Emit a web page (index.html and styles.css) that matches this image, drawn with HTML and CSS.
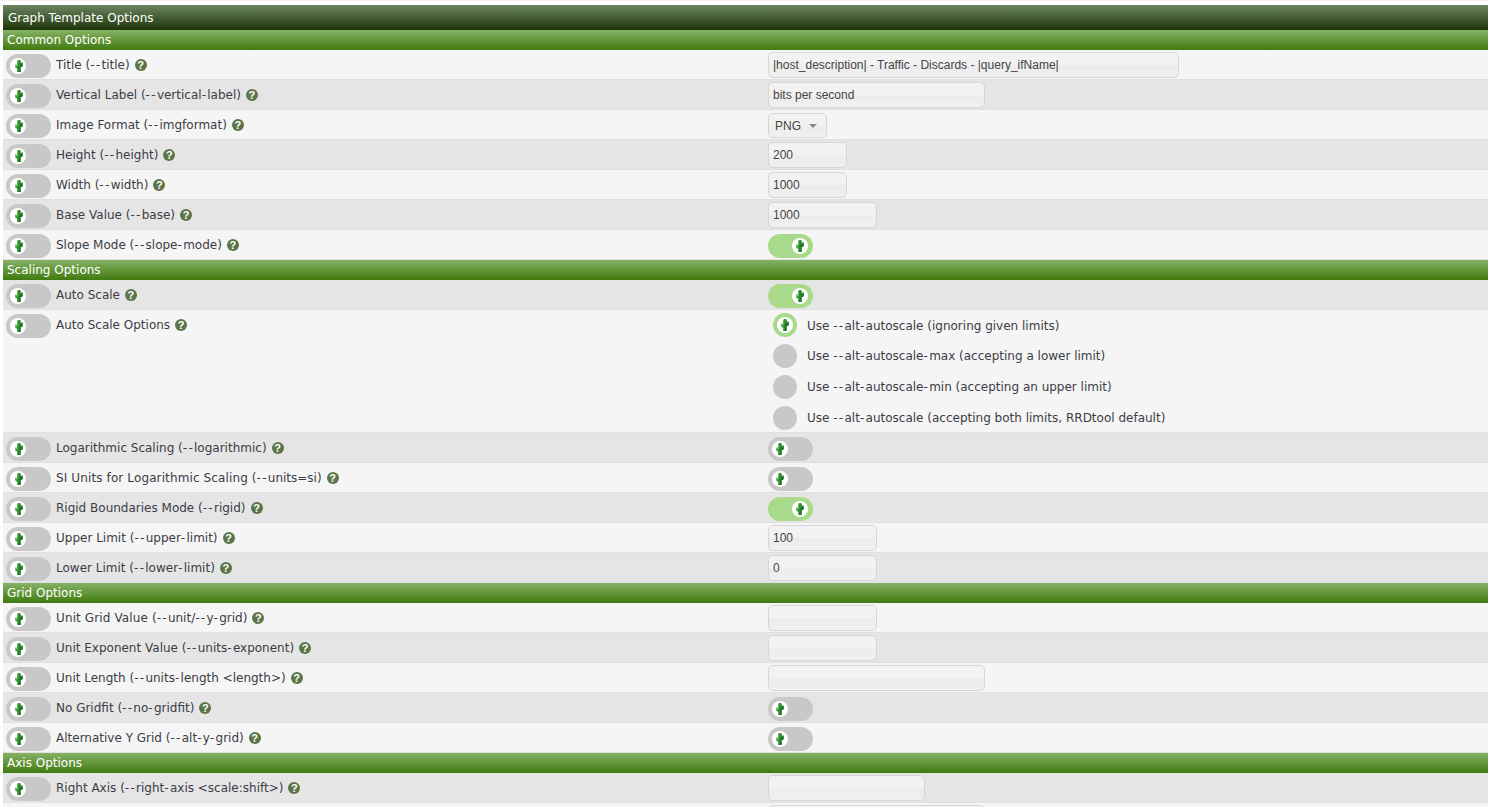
FILE: index.html
```html
<!DOCTYPE html>
<html lang="en">
<head>
<meta charset="utf-8">
<title>Graph Template Options</title>
<link rel="stylesheet" href="styles.css">
</head>
<body>
<svg class="defs" width="0" height="0" aria-hidden="true">
  <defs>
    <linearGradient id="cg" x1="0" y1="0" x2="1" y2="0.3">
      <stop offset="0" stop-color="#62b84e"/>
      <stop offset=".55" stop-color="#2c8f2c"/>
      <stop offset="1" stop-color="#0b651a"/>
    </linearGradient>
    <symbol id="cactus" viewBox="0 0 8 12">
      <path fill="url(#cg)" d="M2.2 1 L3 0 H5 L5.8 1 V3.4 H6.3 V2.6 H7.8 V6 L6.9 7 H5.8 V12 H2.2 V8.6 H1.2 L.2 7.6 V4.4 H1.7 V6 H2.2 Z"/>
    </symbol>
  </defs>
</svg>
<main class="panel">
  <div class="title-bar">Graph Template Options</div>

  <div class="section">Common Options</div>
  <div class="row odd">
    <div class="label-cell"><span class="toggle"><span class="knob"><svg class="cactus"><use href="#cactus"/></svg></span></span><span class="label">Title (<i class="d">--</i>title)</span><span class="help">?</span></div>
    <div class="field-cell"><div class="input w411">|host_description| - Traffic - Discards - |query_ifName|</div></div>
  </div>
  <div class="row even">
    <div class="label-cell"><span class="toggle"><span class="knob"><svg class="cactus"><use href="#cactus"/></svg></span></span><span class="label">Vertical Label (<i class="d">--</i>vertical<i class="d">-</i>label)</span><span class="help">?</span></div>
    <div class="field-cell"><div class="input w217">bits per second</div></div>
  </div>
  <div class="row odd">
    <div class="label-cell"><span class="toggle"><span class="knob"><svg class="cactus"><use href="#cactus"/></svg></span></span><span class="label">Image Format (<i class="d">--</i>imgformat)</span><span class="help">?</span></div>
    <div class="field-cell"><div class="select">PNG<span class="caret"></span></div></div>
  </div>
  <div class="row even">
    <div class="label-cell"><span class="toggle"><span class="knob"><svg class="cactus"><use href="#cactus"/></svg></span></span><span class="label">Height (<i class="d">--</i>height)</span><span class="help">?</span></div>
    <div class="field-cell"><div class="input w79">200</div></div>
  </div>
  <div class="row odd">
    <div class="label-cell"><span class="toggle"><span class="knob"><svg class="cactus"><use href="#cactus"/></svg></span></span><span class="label">Width (<i class="d">--</i>width)</span><span class="help">?</span></div>
    <div class="field-cell"><div class="input w79">1000</div></div>
  </div>
  <div class="row even">
    <div class="label-cell"><span class="toggle"><span class="knob"><svg class="cactus"><use href="#cactus"/></svg></span></span><span class="label">Base Value (<i class="d">--</i>base)</span><span class="help">?</span></div>
    <div class="field-cell"><div class="input w109">1000</div></div>
  </div>
  <div class="row odd">
    <div class="label-cell"><span class="toggle"><span class="knob"><svg class="cactus"><use href="#cactus"/></svg></span></span><span class="label">Slope Mode (<i class="d">--</i>slope<i class="d">-</i>mode)</span><span class="help">?</span></div>
    <div class="field-cell"><span class="toggle on"><span class="knob"><svg class="cactus"><use href="#cactus"/></svg></span></span></div>
  </div>

  <div class="section">Scaling Options</div>
  <div class="row even">
    <div class="label-cell"><span class="toggle"><span class="knob"><svg class="cactus"><use href="#cactus"/></svg></span></span><span class="label">Auto Scale</span><span class="help">?</span></div>
    <div class="field-cell"><span class="toggle on"><span class="knob"><svg class="cactus"><use href="#cactus"/></svg></span></span></div>
  </div>
  <div class="row odd tall">
    <div class="label-cell"><span class="toggle"><span class="knob"><svg class="cactus"><use href="#cactus"/></svg></span></span><span class="label">Auto Scale Options</span><span class="help">?</span></div>
    <div class="radio-group">
      <div class="radio-row first"><span class="radio on"><span class="knob"><svg class="cactus"><use href="#cactus"/></svg></span></span><span class="label">Use <i class="d">--</i>alt<i class="d">-</i>autoscale (ignoring given limits)</span></div>
      <div class="radio-row"><span class="radio"></span><span class="label">Use <i class="d">--</i>alt<i class="d">-</i>autoscale<i class="d">-</i>max (accepting a lower limit)</span></div>
      <div class="radio-row"><span class="radio"></span><span class="label">Use <i class="d">--</i>alt<i class="d">-</i>autoscale<i class="d">-</i>min (accepting an upper limit)</span></div>
      <div class="radio-row"><span class="radio"></span><span class="label">Use <i class="d">--</i>alt<i class="d">-</i>autoscale (accepting both limits, RRDtool default)</span></div>
    </div>
  </div>
  <div class="row even">
    <div class="label-cell"><span class="toggle"><span class="knob"><svg class="cactus"><use href="#cactus"/></svg></span></span><span class="label">Logarithmic Scaling (<i class="d">--</i>logarithmic)</span><span class="help">?</span></div>
    <div class="field-cell"><span class="toggle"><span class="knob"><svg class="cactus"><use href="#cactus"/></svg></span></span></div>
  </div>
  <div class="row odd">
    <div class="label-cell"><span class="toggle"><span class="knob"><svg class="cactus"><use href="#cactus"/></svg></span></span><span class="label"><i class="s">SI Units for Logarithmic Scaling </i>(<i class="d">--</i>units=si)</span><span class="help">?</span></div>
    <div class="field-cell"><span class="toggle"><span class="knob"><svg class="cactus"><use href="#cactus"/></svg></span></span></div>
  </div>
  <div class="row even">
    <div class="label-cell"><span class="toggle"><span class="knob"><svg class="cactus"><use href="#cactus"/></svg></span></span><span class="label">Rigid Boundaries Mode (<i class="d">--</i>rigid)</span><span class="help">?</span></div>
    <div class="field-cell"><span class="toggle on"><span class="knob"><svg class="cactus"><use href="#cactus"/></svg></span></span></div>
  </div>
  <div class="row odd">
    <div class="label-cell"><span class="toggle"><span class="knob"><svg class="cactus"><use href="#cactus"/></svg></span></span><span class="label">Upper Limit (<i class="d">--</i>upper<i class="d">-</i>limit)</span><span class="help">?</span></div>
    <div class="field-cell"><div class="input w109">100</div></div>
  </div>
  <div class="row even">
    <div class="label-cell"><span class="toggle"><span class="knob"><svg class="cactus"><use href="#cactus"/></svg></span></span><span class="label">Lower Limit (<i class="d">--</i>lower<i class="d">-</i>limit)</span><span class="help">?</span></div>
    <div class="field-cell"><div class="input w109">0</div></div>
  </div>

  <div class="section">Grid Options</div>
  <div class="row odd">
    <div class="label-cell"><span class="toggle"><span class="knob"><svg class="cactus"><use href="#cactus"/></svg></span></span><span class="label"><i class="s">Unit Grid Value </i>(<i class="d">--</i>unit/<i class="d">--</i>y<i class="d">-</i>grid)</span><span class="help">?</span></div>
    <div class="field-cell"><div class="input w109"></div></div>
  </div>
  <div class="row even">
    <div class="label-cell"><span class="toggle"><span class="knob"><svg class="cactus"><use href="#cactus"/></svg></span></span><span class="label">Unit Exponent Value (<i class="d">--</i>units<i class="d">-</i>exponent)</span><span class="help">?</span></div>
    <div class="field-cell"><div class="input w109"></div></div>
  </div>
  <div class="row odd">
    <div class="label-cell"><span class="toggle"><span class="knob"><svg class="cactus"><use href="#cactus"/></svg></span></span><span class="label">Unit Length (<i class="d">--</i>units<i class="d">-</i>length &lt;length&gt;)</span><span class="help">?</span></div>
    <div class="field-cell"><div class="input w217"></div></div>
  </div>
  <div class="row even">
    <div class="label-cell"><span class="toggle"><span class="knob"><svg class="cactus"><use href="#cactus"/></svg></span></span><span class="label">No Gridfit (<i class="d">--</i>no<i class="d">-</i>gridfit)</span><span class="help">?</span></div>
    <div class="field-cell"><span class="toggle"><span class="knob"><svg class="cactus"><use href="#cactus"/></svg></span></span></div>
  </div>
  <div class="row odd">
    <div class="label-cell"><span class="toggle"><span class="knob"><svg class="cactus"><use href="#cactus"/></svg></span></span><span class="label">Alternative Y Grid (<i class="d">--</i>alt<i class="d">-</i>y<i class="d">-</i>grid)</span><span class="help">?</span></div>
    <div class="field-cell"><span class="toggle"><span class="knob"><svg class="cactus"><use href="#cactus"/></svg></span></span></div>
  </div>

  <div class="section">Axis Options</div>
  <div class="row even">
    <div class="label-cell"><span class="toggle"><span class="knob"><svg class="cactus"><use href="#cactus"/></svg></span></span><span class="label">Right Axis (<i class="d">--</i>right<i class="d">-</i>axis &lt;scale:shift&gt;)</span><span class="help">?</span></div>
    <div class="field-cell"><div class="input w157"></div></div>
  </div>
  <div class="row odd">
    <div class="label-cell"></div>
    <div class="field-cell"><div class="input w217"></div></div>
  </div>
</main>
</body>
</html>
```
FILE: styles.css
```css
html, body {
  margin: 0;
  padding: 0;
  height: 807px;
  overflow: hidden;
  background: #fff;
}
body {
  font-family: "DejaVu Sans", Verdana, sans-serif;
  font-size: 12px;
  color: #3c3c46;
  border-top: 1px solid #eee;
  box-sizing: border-box;
}
.defs { position: absolute; }
.panel {
  margin: 4px 0 0 3px;
}
.title-bar {
  height: 25px;
  line-height: 27px;
  padding-left: 5px;
  color: #fff;
  background: linear-gradient(#6b8560, #1e3508);
}
.section {
  height: 20px;
  line-height: 21px;
  padding-left: 4px;
  color: #fff;
  background: linear-gradient(#86b265, #3f7a0f);
}
.row {
  display: flex;
  height: 30px;
  box-sizing: border-box;
  border-bottom: 1px solid #e0e0e0;
}
.row.tall { height: 123px; }
.odd { background: #f5f5f5; }
.even { background: #e5e5e5; }
.label-cell {
  width: 765px;
  flex: none;
  display: flex;
  align-items: center;
  height: 29px;
  padding-left: 3px;
  box-sizing: border-box;
}
.field-cell {
  display: flex;
  align-items: flex-start;
  height: 29px;
}
.toggle {
  display: flex;
  align-items: center;
  align-self: flex-start;
  flex: none;
  width: 45px;
  height: 24px;
  margin-top: 4px;
  padding-left: 4px;
  box-sizing: border-box;
  border-radius: 12px;
  background: #c8c8c8;
}
.toggle.on {
  justify-content: flex-end;
  padding: 0 5px 0 0;
  background: #a9d98a;
}
.knob {
  display: flex;
  align-items: center;
  justify-content: center;
  width: 16px;
  height: 16px;
  border-radius: 50%;
  background: #fff;
}
.cactus { width: 8px; height: 12px; }
.label-cell .cactus { margin-left: 1px; }
.label { margin-left: 5px; white-space: nowrap; }
.d { font-style: normal; letter-spacing: 1.3px; }
.s { font-style: normal; letter-spacing: .12px; }
.help {
  flex: none;
  width: 12px;
  height: 12px;
  margin-left: 5px;
  border-radius: 50%;
  background: #5b7548;
  color: #fff;
  font: bold 11px/12px "Liberation Sans", sans-serif;
  text-align: center;
}
.input, .select {
  box-sizing: border-box;
  height: 26px;
  margin-top: 2px;
  line-height: 24px;
  padding-left: 4px;
  border: 1px solid #d6d6d6;
  border-radius: 5px;
  background: linear-gradient(#f2f2f2 0, #f2f2f2 50%, #ececec 55%, #f0f0f0 100%);
  font-family: "Liberation Sans", Arial, sans-serif;
  color: #444;
}
.w79 { width: 79px; }
.w109 { width: 109px; }
.w157 { width: 157px; }
.w217 { width: 217px; }
.w411 { width: 411px; }
.select {
  display: flex;
  align-items: center;
  width: 59px;
  height: 25px;
  margin-top: 3px;
  padding-left: 6px;
  font-size: 12px;
}
.caret {
  width: 0;
  height: 0;
  margin-left: 8px;
  border-left: 4px solid transparent;
  border-right: 4px solid transparent;
  border-top: 4px solid #888;
}
.radio-group {
  display: flex;
  flex-direction: column;
  gap: 7px;
  padding: 3px 0 0 5px;
}
.radio-row {
  display: flex;
  align-items: center;
  height: 24px;
}
.radio {
  display: flex;
  align-items: center;
  justify-content: center;
  flex: none;
  width: 24px;
  height: 24px;
  border-radius: 50%;
  background: #c8c8c8;
}
.radio.on { background: #a9d98a; }
.radio-row .label { margin-left: 10px; }
.radio-row.first .label { margin-top: 2px; }
```
